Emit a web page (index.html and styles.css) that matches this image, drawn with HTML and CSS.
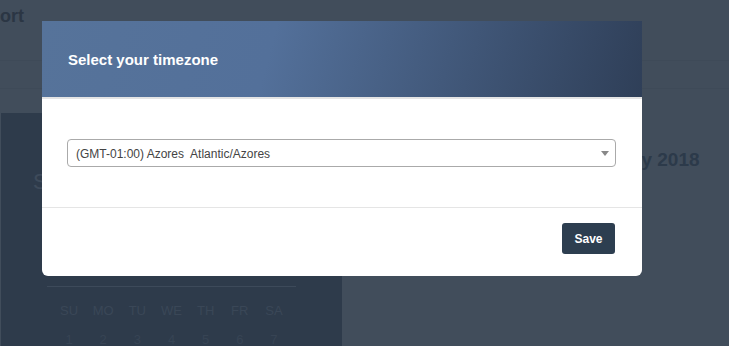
FILE: index.html
```html
<!DOCTYPE html>
<html lang="en">
<head>
    <meta charset="UTF-8">
    <meta name="viewport" content="width=device-width, initial-scale=1.0">
    <title>Report</title>
    <link rel="stylesheet" href="styles.css">
</head>
<body>
    <div class="topbar">
        <h1 class="page-title">Report</h1>
    </div>
    <div class="toolbar"></div>

    <div class="content">
        <div class="sidebar">
            <h2 class="sidebar-title">Schedule</h2>
            <div class="calendar">
                <div class="cal-row weekdays">
                    <span>SU</span><span>MO</span><span>TU</span><span>WE</span><span>TH</span><span>FR</span><span>SA</span>
                </div>
                <div class="cal-row days">
                    <span>1</span><span>2</span><span>3</span><span>4</span><span>5</span><span>6</span><span>7</span>
                </div>
            </div>
        </div>
        <div class="main">
            <h2 class="month-title">July 2018</h2>
        </div>
    </div>

    <!-- Timezone Modal -->
    <div id="timezoneModal" class="backdrop">
        <div class="modal">
            <div class="modal-header">
                <h3>Select your timezone</h3>
            </div>
            <div class="modal-body">
                <div class="tz-select">
                    <span class="tz-value">(GMT-01:00) Azores  Atlantic/Azores</span>
                    <span class="tz-arrow"><b></b></span>
                </div>
            </div>
            <div class="modal-footer">
                <button class="btn-save">Save</button>
            </div>
        </div>
    </div>
</body>
</html>
```

FILE: styles.css
```css
body { margin: 0; background: #829ab6; font-family: "Liberation Sans", Arial, sans-serif; overflow: hidden; height: 346px; }
h1, h2, h3 { margin: 0; }

.topbar { height: 56px; padding: 4px 0 0 0; border-bottom: 1px solid #7c94b0; }
.page-title { margin-left: -34px; font-size: 18px; line-height: 24px; font-weight: bold; color: #566c88; }
.toolbar { height: 27px; border-bottom: 1px solid #7c94b0; }

.content { display: flex; padding-top: 24px; }
.sidebar { width: 341px; margin-left: 1px; height: 240px; background: #5c7696; }
.sidebar-title { padding: 56px 0 0 32px; font-size: 22px; line-height: 26px; font-weight: normal; color: #7c96b6; }
.calendar { width: 249px; margin: 91px auto 0; border-top: 1px solid #7a94b4; }
.cal-row { display: grid; grid-template-columns: repeat(7, 1fr); padding: 0 5px; text-align: center; font-size: 13px; line-height: 16px; }
.weekdays { padding-top: 16px; color: #748eae; }
.days { padding-top: 13px; color: #6e88a8; }

.main { flex: 1; padding: 36px 0 0 272px; }
.month-title { font-size: 19px; line-height: 22px; font-weight: bold; color: #587494; white-space: nowrap; }

.backdrop { position: fixed; top: 0; left: 0; width: 100%; height: 100%; background: rgba(0, 0, 0, 0.5); }
.modal { width: 600px; margin: 21px 0 0 42px; background: white; border-radius: 0 0 6px 6px; }
.modal-header { height: 76px; display: flex; align-items: center; padding: 0 26px; background: linear-gradient(105deg, #56739a 0%, #53709a 38%, #2f3f58 100%); border-bottom: 2px solid #e4e4e4; }
.modal-header h3 { font-size: 15px; font-weight: bold; color: white; }
.modal-body { padding: 40px 26px 40px 25px; border-bottom: 1px solid #e5e5e5; }
.tz-select { position: relative; height: 26px; border: 1px solid #aaa; border-radius: 4px; }
.tz-value { display: block; padding: 0 20px 0 8px; font-size: 12px; line-height: 28px; height: 26px; color: #444; white-space: pre; }
.tz-arrow { position: absolute; top: 0; right: 0; width: 20px; height: 26px; }
.tz-arrow b { position: absolute; left: 50%; top: 50%; margin: -2px 0 0 -4px; border-style: solid; border-color: #888 transparent transparent; border-width: 5px 4px 0; }
.modal-footer { display: flex; justify-content: flex-end; padding: 15px 27px 22px; }
.btn-save { width: 53px; height: 31px; border: none; border-radius: 3px; background: #2d3e50; color: white; font-family: "Liberation Sans", Arial, sans-serif; font-size: 12px; font-weight: bold; }
```
